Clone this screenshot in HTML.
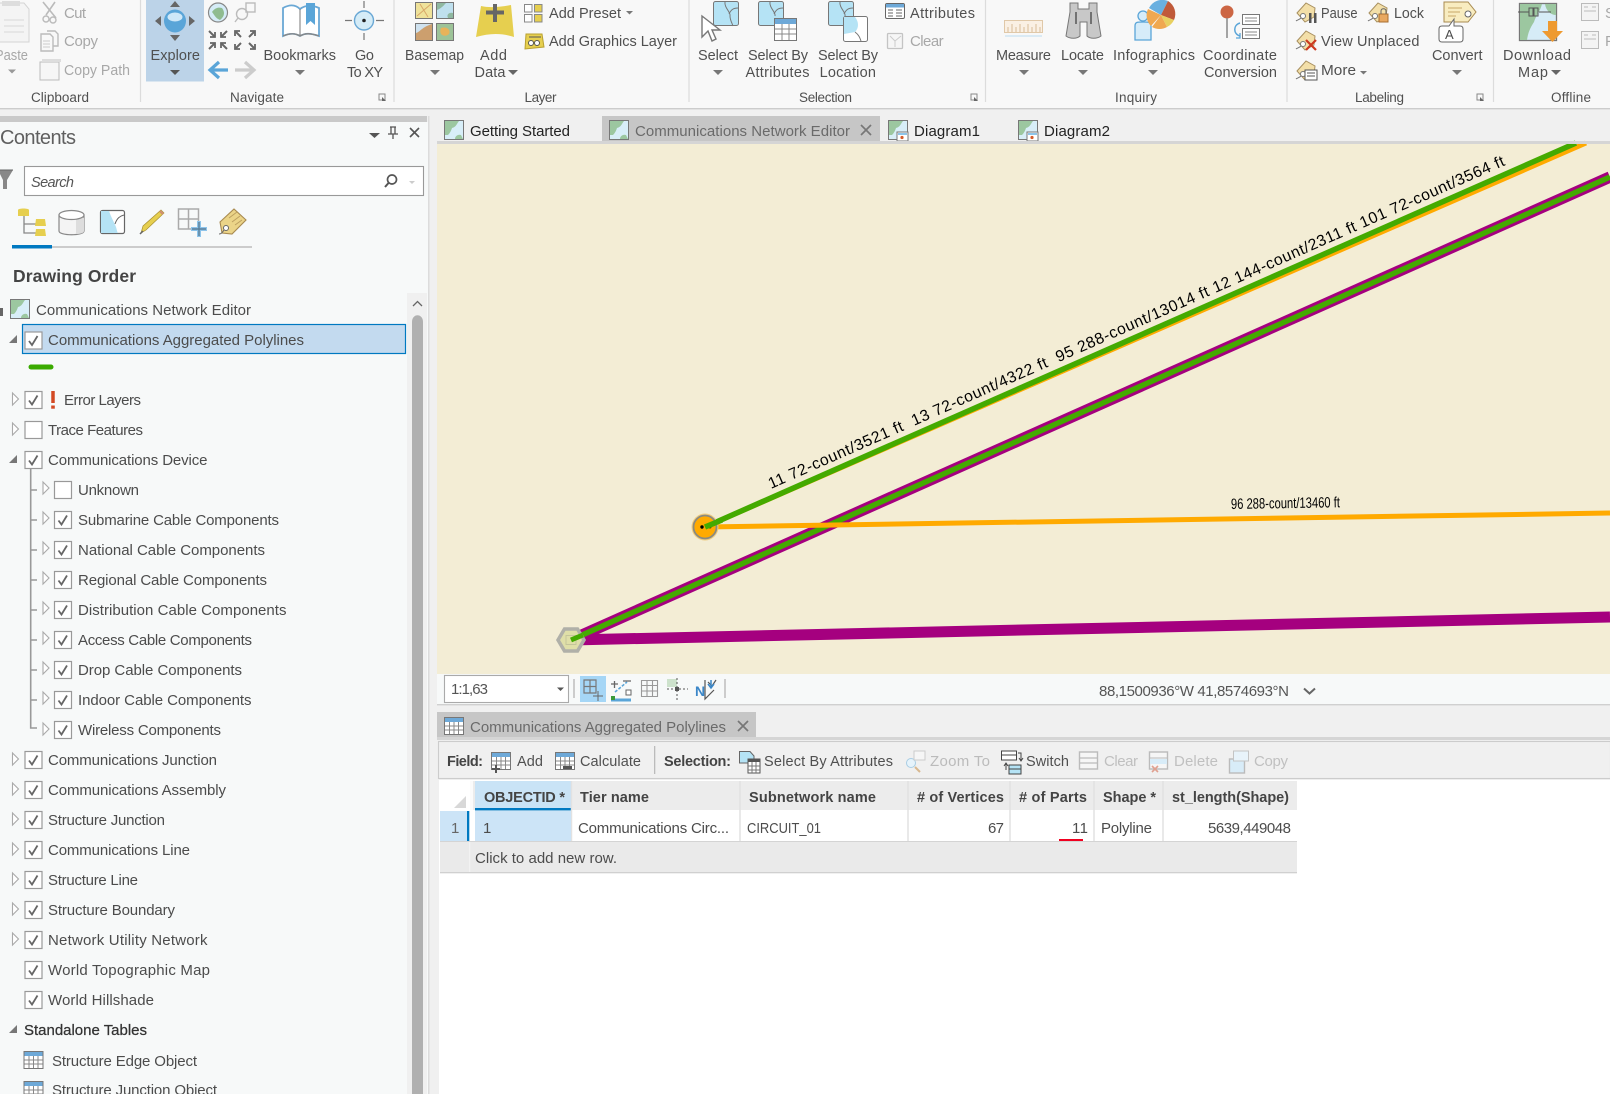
<!DOCTYPE html>
<html><head><meta charset="utf-8"><title>Communications Network Editor</title>
<style>
html,body{margin:0;padding:0;background:#f0f0f0;overflow:hidden;width:1610px;height:1094px}
svg{display:block}
text{font-family:"Liberation Sans",sans-serif;font-size:15px;fill:#4c4c4c}
.g{fill:#a8a8a8}
.r{font-size:14.5px;fill:#505050}
.n{font-size:13.5px;fill:#505050}
.b{font-weight:bold;font-size:14.5px;fill:#444}
.k{fill:#000;font-size:15.8px}
.s{fill:none;stroke:#777;stroke-width:1.4}
.l{fill:none;stroke:#bbb;stroke-width:1.4}
</style></head><body>
<svg width="1610" height="1094" viewBox="0 0 1610 1094" xmlns="http://www.w3.org/2000/svg">
<defs>
<g id="cb"><rect x=".5" y=".5" width="17" height="17" fill="#fff" stroke="#999" stroke-width="1.2"/></g>
<g id="ck"><use href="#cb"/><path d="M4.5 9.5L7.5 13.5L13 4.5" fill="none" stroke="#666" stroke-width="1.8"/></g>
<path id="to" d="M0-6L6 0L0 6Z" fill="#fff" stroke="#aaa" stroke-width="1.1"/>
<path id="tc" d="M8-5V3H0Z" fill="#777"/>
<g id="map"><rect x=".5" y=".5" width="19" height="19" fill="#d8eef8" stroke="#777"/><path d="M1 1H15C12 5 12 7 8 8C7 11 6 13 4 15H1Z" fill="#9cc7a0"/><path d="M11 19C11 16 14 14 17 15L19 19Z" fill="#9cc7a0"/></g>
<g id="dia"><use href="#map"/><rect x="9" y="12" width="11" height="9" fill="#fff" stroke="#777"/><rect x="10" y="13" width="9" height="2" fill="#8ec4e8"/><circle cx="14" cy="17.5" r="1.6" fill="#d45a2a"/></g>
<g id="tb"><rect x=".5" y=".5" width="19" height="17" fill="#fff" stroke="#777"/><rect x="1" y="1" width="18" height="4" fill="#6ea9d8"/><path d="M1 9H19M1 13H19M5.5 5V17M10 5V17M14.500 5V17" stroke="#888" fill="none"/></g>
<g id="tag"><path d="M1 11L10 1L19 6L18 15L9 20Z" fill="#f3dfa8" stroke="#a89060"/><circle cx="7" cy="14" r="2.500" fill="#fff" stroke="#777"/><path d="M5 16C3 18 1 18 0 19" stroke="#777" fill="none"/></g>
<g id="gt"><rect x=".5" y=".5" width="17" height="17" fill="#f4f4f4" stroke="#bbb"/><path d="M3 4H7M11 4H15M3 8H15" stroke="#bbb"/></g>
</defs>

<!-- background -->
<rect width="1610" height="1094" fill="#f0f0f0"/>
<!-- ribbon -->
<rect width="1610" height="108" fill="#f8f8f8"/>
<rect y="108" width="1610" height="1.400" fill="#ccc"/>
<path d="M140.500 0V102M394 0V102M689 0V102M985.500 0V102M1287 0V102M1493.500 0V102" stroke="#dcdcdc" stroke-width="1.200"/>
<rect x="146" y="0" width="58" height="81.500" fill="#bcd3e8"/>

<!-- clipboard -->
<path d="M-2 3H24L29 9V42H-2Z" fill="#f4f4f4" stroke="#d4d4d4"/><path d="M4 20H24M4 26H24M4 32H24" stroke="#d8d8d8"/>
<rect x="2" y="1" width="18" height="5" fill="#ddd"/>
<path d="M43 2L56 18M55 2L46 15" stroke="#bbb" stroke-width="1.600" fill="none"/><circle cx="46" cy="19" r="3" class="l"/><circle cx="53" cy="20" r="3" class="l"/>
<path d="M41 34H50L53 37V51H41Z M47 31H55L58 34V46H53" class="l" fill="#f6f6f6"/><path d="M43 41H50M43 44H50M43 47H50" stroke="#ccc"/>
<rect x="40" y="62" width="19" height="18" fill="#f6f6f6" stroke="#bbb"/><rect x="42" y="59" width="19" height="3" fill="#ddd"/>
<text class="g" x="64" y="18" textLength="22">Cut</text>
<text class="g" x="64" y="46" textLength="34">Copy</text>
<text class="g" x="64" y="75" textLength="66" lengthAdjust="spacingAndGlyphs" style="font-size:14.500px">Copy Path</text>
<text class="g" x="-5" y="60" textLength="33" lengthAdjust="spacingAndGlyphs" style="font-size:14.500px">Paste</text>
<path d="M8 69.500H16L12 73.500Z" fill="#999"/>
<text x="31" y="102" textLength="58" class="n">Clipboard</text>

<!-- navigate -->
<path d="M175 1L180 7H170ZM175 41L170 35H180ZM155 21L161 16V26ZM195 21L189 16V26Z" fill="#666"/>
<ellipse cx="175" cy="21" rx="11" ry="11.500" fill="#5aa5d8"/><ellipse cx="175" cy="17" rx="7.500" ry="4.500" fill="#cfe8f8"/>
<text x="150.500" y="60" textLength="49.500" class="r">Explore</text>
<path d="M170 70H180L175 75Z" fill="#555"/>
<circle cx="218" cy="12.500" r="9.500" fill="#d5ecf7" stroke="#888" stroke-width="1.200"/><path d="M212 12C215 8 218 7 222 8C225 12 225 16 220 20C215 18 214 14 212 12Z" fill="#8fbc90"/>
<circle cx="242" cy="14" r="5.500" class="l"/><path d="M238 18L235 22" class="l"/><rect x="246" y="3" width="9" height="9" class="l"/>
<path d="M209 31L215 37M227 31L221 37M209 49L215 43M227 49L221 43" stroke="#666" stroke-width="2"/><path d="M215 32V37H210M221 32V37H226M215 48V43H210M221 48V43H226" stroke="#666" stroke-width="1.800" fill="none"/>
<path d="M241 37L236 32M249 37L254 32M241 43L236 48M249 43L254 48" stroke="#666" stroke-width="2"/><path d="M235 36V31H240M255 36V31H250M235 44V49H240M255 44V49H250" stroke="#666" stroke-width="1.800" fill="none"/>
<path d="M228 70H212M219 62L210 70L219 78" fill="none" stroke="#5aa5d8" stroke-width="3.200"/>
<path d="M235 70H252M245 62L254 70L245 78" fill="none" stroke="#ccc" stroke-width="3.200"/>
<path d="M283 36V8C292 3 297 6 300 9C304 6 310 4 319 8V36C310 33 305 33 300 36C295 33 290 33 283 36Z" fill="#fff" stroke="#6aa8d5" stroke-width="1.800"/><path d="M300 9V36" stroke="#777"/><path d="M283 36C290 33 295 33 300 36C305 33 310 33 319 36" fill="none" stroke="#888" stroke-width="1.400"/><path d="M306 3H315V25L310.500 21L306 25Z" fill="#5aa5d8"/>
<text x="263.500" y="60" textLength="72.500" class="r">Bookmarks</text><path d="M295 70H305L300 75Z" fill="#777"/>
<circle cx="364" cy="20.500" r="9.500" fill="#d5ecf7" stroke="#6aa8d5" stroke-width="1.400"/><circle cx="364" cy="20.500" r="1.800" fill="#222"/><path d="M364 1V8M364 33V40M345 20.500H352M376 20.500H384" stroke="#777" stroke-width="1.200"/>
<text x="355" y="60" textLength="19" class="r">Go</text><text x="347" y="77" textLength="36" class="r">To XY</text>
<text x="230" y="102" textLength="54" class="n">Navigate</text>
<rect x="379" y="94" width="6" height="6" fill="none" stroke="#888"/><path d="M382 97L386 101H382Z" fill="#666"/>

<!-- layer -->
<rect x="415.500" y="2.500" width="17" height="16" fill="#efe29a" stroke="#777"/><path d="M417 16L431 4M420 4L428 17" stroke="#d8a868"/>
<rect x="436.500" y="2.500" width="17" height="16" fill="#bfe0ee" stroke="#777"/><path d="M437 10C442 8 444 5 446 3H437ZM448 18C446 14 450 12 453 13V18Z" fill="#8fb8a0"/>
<rect x="415.500" y="23.500" width="17" height="17" fill="#cfe2ef" stroke="#777"/><path d="M416 40V33C420 32 422 27 432 24V40Z" fill="#cc9f6e"/>
<rect x="436.500" y="23.500" width="17" height="17" fill="#9dc398" stroke="#777"/><path d="M441 28C447 26 451 30 449 34C445 38 438 35 441 28Z" fill="#e8b35a"/>
<text x="405" y="60" textLength="59" class="r" lengthAdjust="spacingAndGlyphs">Basemap</text><path d="M430 70H440L435 75Z" fill="#777"/>
<path d="M481 6C490 8 500 7 511 5L514 37C502 33 490 33 476 37Z" fill="#e6cf4f"/><path d="M495 4V22M486 12.500H504" stroke="#666" stroke-width="4"/>
<text x="480" y="60" textLength="27" class="r">Add</text><text x="474.500" y="77" textLength="31" class="r">Data</text><path d="M508 70H518L513 75Z" fill="#666"/>
<rect x="524.500" y="4.500" width="7.500" height="7.500" fill="#fff" stroke="#888"/><rect x="534.500" y="4.500" width="7.500" height="7.500" fill="#e6cf4f" stroke="#888"/><rect x="524.500" y="14.500" width="7.500" height="7.500" fill="#fff" stroke="#888"/><rect x="534.500" y="14.500" width="7.500" height="7.500" fill="#e6cf4f" stroke="#888"/>
<path d="M526 34H542L544 47L525 49Z" fill="#e6cf4f" stroke="#b8a030"/><circle cx="531" cy="43" r="2.500" fill="#fff" stroke="#555"/><circle cx="537" cy="43" r="2.500" fill="#fff" stroke="#555"/><path d="M529 37H541" stroke="#555"/>
<text x="549" y="18" textLength="72" class="r">Add Preset</text><path d="M626 11H633L629.500 14.500Z" fill="#777"/>
<text x="549" y="46" textLength="128" class="r">Add Graphics Layer</text>
<text x="524.500" y="102" textLength="32" class="n">Layer</text>

<!-- selection -->
<rect x="713.500" y="1.500" width="25" height="24" rx="2" fill="#b5e3f5" stroke="#777"/><path d="M725 1.500C724 8 731 12 730 16C730 20 732 23 733 26M738 8C733 8 731 10 729 14" fill="none" stroke="#777"/>
<path d="M702 16V37L708 31L712 41L716 39L712 30L720 30Z" fill="#fff" stroke="#777" stroke-width="1.400"/>
<text x="698" y="60" textLength="40" class="r">Select</text><path d="M713 70H723L718 75Z" fill="#777"/>
<rect x="758.500" y="1.500" width="25" height="24" rx="2" fill="#b5e3f5" stroke="#777"/><path d="M770 1.500C769 8 776 12 775 16M783 8C778 8 776 10 774 14" fill="none" stroke="#777"/>
<rect x="774.500" y="18.500" width="22" height="22" fill="#fff" stroke="#777"/><rect x="775" y="19" width="21" height="5" fill="#6ea9d8"/><path d="M775 29H796M775 34H796M782 24V40M789 24V40" stroke="#888"/>
<text x="748" y="60" textLength="60" class="r">Select By</text><text x="745.500" y="77" textLength="64" class="r">Attributes</text>
<rect x="828.500" y="1.500" width="25" height="24" rx="2" fill="#b5e3f5" stroke="#777"/><path d="M840 1.500C839 8 846 12 845 16M853 8C848 8 846 10 844 14" fill="none" stroke="#777"/>
<rect x="843.500" y="16.500" width="24" height="25" rx="2" fill="#fff" stroke="#777"/><path d="M844 17H855C859 22 859 28 855 32L844 34Z" fill="#b5e3f5"/><path d="M855 32C859 35 860 38 861 41" stroke="#777" fill="none"/>
<text x="818" y="60" textLength="60" class="r">Select By</text><text x="819.600" y="77" textLength="56.400" class="r">Location</text>
<rect x="885.500" y="3.500" width="19" height="15" rx="1.500" fill="#fff" stroke="#666"/><rect x="886" y="4" width="18" height="3.500" fill="#6ea9d8"/><path d="M888 10H893M888 13H893M888 16H893M896 10H902M896 13H902M896 16H902" stroke="#666"/>
<text x="910" y="18" textLength="65" class="r">Attributes</text>
<rect x="887.500" y="33.500" width="15" height="15" rx="1" fill="#f6f6f6" stroke="#c4c4c4" stroke-width="1.300"/><path d="M890 36L895 41V47M901 36L895 41" stroke="#ccc" fill="none"/>
<text x="910" y="46" textLength="33.600" class="g">Clear</text>
<text x="799" y="102" textLength="53" class="n">Selection</text>
<rect x="971" y="94" width="6" height="6" fill="none" stroke="#888"/><path d="M974 97L978 101H974Z" fill="#666"/>

<!-- inquiry -->
<rect x="1004.500" y="20.500" width="38" height="12" fill="#faf0e4" stroke="#e0c8a8"/><path d="M1008 32V27M1012 32V24M1016 32V27M1020 32V24M1024 32V27M1028 32V24M1032 32V27M1036 32V24M1040 32V27" stroke="#d8bc98"/><path d="M1005 36H1042" stroke="#bcdcf0"/>
<text x="996" y="60" textLength="55" class="r">Measure</text><path d="M1019 70H1029L1024 75Z" fill="#777"/>
<path d="M1070 3H1078V9H1089V3H1097V12L1101 36C1097 39 1090 39 1087 36V22H1080V36C1077 39 1070 39 1066 36L1070 12Z" fill="#c8c8c8" stroke="#777"/><path d="M1076 12V24M1091 12V24" stroke="#555" stroke-width="1.500"/>
<text x="1061" y="60" textLength="43" class="r">Locate</text><path d="M1078 70H1088L1083 75Z" fill="#777"/>
<circle cx="1143" cy="16" r="5" fill="#d6ecf9" stroke="#5aa5d8" stroke-width="1.300"/><path d="M1135 40V26C1135 22 1137 22 1143 22C1149 22 1151 22 1151 26V40Z" fill="#d6ecf9" stroke="#5aa5d8" stroke-width="1.300"/>
<path d="M1161 15L1148 9A15 15 0 0 0 1151 26Z" fill="#f0a850"/><path d="M1161 15L1149 8A15 15 0 0 1 1168 1Z" fill="#6ab0e0"/><path d="M1161 15L1168 1A15 15 0 0 1 1174 20Z" fill="#c05a3a"/><path d="M1161 15L1174 20A15 15 0 0 1 1167 27Z" fill="#e8d060"/><path d="M1161 15L1167 27A15 15 0 0 1 1152 27Z" fill="#f0a850"/>
<text x="1113" y="60" textLength="82" class="r">Infographics</text><path d="M1148 70H1158L1153 75Z" fill="#777"/>
<circle cx="1227" cy="12" r="6.500" fill="#cc6644"/><path d="M1227 18V38" stroke="#888" stroke-width="1.500"/>
<rect x="1242.500" y="14.500" width="17" height="10" fill="#fff" stroke="#777"/><rect x="1242.500" y="28.500" width="17" height="10" fill="#fff" stroke="#777"/><path d="M1245 18H1257M1245 21H1257M1245 32H1257M1245 35H1257" stroke="#888"/>
<path d="M1240 23C1233 25 1233 34 1240 36" fill="none" stroke="#5aa5d8" stroke-width="1.500"/><path d="M1240 33V38H1236" fill="none" stroke="#5aa5d8" stroke-width="1.300"/>
<text x="1203" y="60" textLength="74" class="r">Coordinate</text><text x="1204" y="77" textLength="73" class="r">Conversion</text>
<text x="1115" y="102" textLength="42" class="n">Inquiry</text>

<!-- labeling -->
<use href="#tag" x="1296" y="2"/><rect x="1309" y="13" width="2.500" height="10" fill="#555"/><rect x="1314" y="13" width="2.500" height="10" fill="#555"/>
<text x="1321" y="18" textLength="36.500" class="r" lengthAdjust="spacingAndGlyphs">Pause</text>
<use href="#tag" x="1368" y="2"/><rect x="1379" y="14" width="9" height="8" fill="#e8a860" stroke="#a86e30"/><path d="M1381 14V11C1381 8 1386 8 1386 11V14" fill="none" stroke="#666"/>
<text x="1394" y="18" textLength="30" class="r" lengthAdjust="spacingAndGlyphs">Lock</text>
<use href="#tag" x="1296" y="30"/><path d="M1306 40L1316 50M1316 40L1306 50" stroke="#cc3a20" stroke-width="2.200"/>
<text x="1321" y="46" textLength="98.500" class="r">View Unplaced</text>
<use href="#tag" x="1296" y="60"/><rect x="1305" y="70" width="12" height="10" fill="#fff" stroke="#555"/><path d="M1307 73H1315M1307 76H1315" stroke="#555"/>
<text x="1321" y="75" textLength="35" class="r" lengthAdjust="spacingAndGlyphs">More</text><path d="M1360 71H1367L1363.500 74.500Z" fill="#777"/>
<path d="M1444 2H1468L1476 12L1468 22H1444Z" fill="#f8ecc0" stroke="#a88a50"/><path d="M1448 8H1462M1448 12H1460M1448 16H1456" stroke="#c8a868"/><circle cx="1468" cy="14" r="3" fill="#fff" stroke="#666"/>
<path d="M1442 26H1449L1454 19V26H1460C1462 26 1463 27 1463 29V39C1463 41 1462 42 1460 42H1442C1440 42 1439 41 1439 39V29C1439 27 1440 26 1442 26Z" fill="#fff" stroke="#666"/>
<text x="1445" y="39" style="font-size:13px" fill="#555">A</text>
<text x="1432" y="60" textLength="50.500" class="r">Convert</text><path d="M1452 70H1462L1457 75Z" fill="#777"/>
<text x="1355" y="102" textLength="49" class="n">Labeling</text>
<rect x="1477" y="94" width="6" height="6" fill="none" stroke="#888"/><path d="M1480 97L1484 101H1480Z" fill="#666"/>

<!-- offline -->
<rect x="1519.500" y="3.500" width="37" height="37" fill="#d6ecf7" stroke="#777" stroke-width="1.300"/><path d="M1520 4H1542C1540 12 1536 15 1534 22C1530 28 1528 33 1527 40H1520Z" fill="#9cc7a0"/><path d="M1545 4H1556V15C1551 15 1546 11 1545 4Z" fill="#9cc7a0"/>
<path d="M1518 12H1529M1539 12H1551" stroke="#555"/><rect x="1529" y="8" width="4" height="8" fill="none" stroke="#555"/><rect x="1534" y="8" width="4" height="8" fill="none" stroke="#555"/>
<path d="M1548 21H1557V31H1563L1552.500 42L1542 31H1548Z" fill="#ee9a30"/>
<text x="1503" y="60" textLength="68" class="r">Download</text><text x="1518" y="77" textLength="30" class="r">Map</text><path d="M1551 70H1561L1556 75Z" fill="#666"/>
<text x="1551" y="102" textLength="40" class="n">Offline</text>
<use href="#gt" x="1581" y="3"/><use href="#gt" x="1581" y="31"/>
<text x="1605" y="18" class="g">S</text><text x="1605" y="46" class="g">F</text>

<!-- Contents pane -->
<rect x="0" y="116" width="427" height="6" fill="#c9c9c9"/>
<rect x="0" y="122" width="428" height="972" fill="#f7f9f9"/>
<rect x="428" y="116" width="1.500" height="978" fill="#dcdcdc"/>
<text x="0" y="144" textLength="76" style="font-size:20px;fill:#606060">Contents</text>
<path d="M369 133H380L374.500 138Z" fill="#555"/>
<path d="M390 127H396M391 127V134H395V127M388 134H398M393 134V139" stroke="#555" fill="none" stroke-width="1.300"/>
<path d="M410 128L419 137M419 128L410 137" stroke="#555" stroke-width="1.600"/>
<path d="M-2 170H13L7 180V189H3V180Z" fill="#888"/><path d="M-2 170H13" stroke="#666"/>
<rect x="24.500" y="166.500" width="399" height="29" fill="#fff" stroke="#999" stroke-width="1.100"/>
<text x="31" y="187" textLength="43" style="font-style:italic;font-size:14.500px;fill:#555">Search</text>
<circle cx="392" cy="179.500" r="4.500" fill="none" stroke="#555" stroke-width="1.700"/><path d="M388.500 183L385 187" stroke="#555" stroke-width="2"/>
<path d="M409 181H415L412 184Z" fill="#ccc"/>

<!-- contents icon row -->
<path d="M18 210C18 208 29 208 29 210V216H18Z" fill="#e6cf4f"/><path d="M24 216V233H36M24 224H36" stroke="#888" stroke-width="1.300" fill="none"/><path d="M36 219H45L46 226H35Z M36 229H45L46 236H35Z" fill="#e6cf4f"/>
<path d="M59 215V231C59 236 84 236 84 231V215Z" fill="#f4f4f4" stroke="#888" stroke-width="1.200"/><path d="M76 218H84V231C84 233 80 234 76 234Z" fill="#ddd"/><ellipse cx="71.500" cy="215" rx="12.500" ry="4.500" fill="#fff" stroke="#888" stroke-width="1.200"/>
<rect x="100.500" y="210.500" width="24" height="23" rx="2" fill="#fff" stroke="#666" stroke-width="1.200"/><path d="M101 211H109C111 217 114 222 116 227C117 230 117 232 118 233H101Z" fill="#b5e3f5"/><path d="M124 215C120 216 117 218 115 224" fill="none" stroke="#666"/>
<path d="M141 233L143 226L161 210L164 213L146 230Z" fill="#e6cf4f" stroke="#a89030" stroke-width=".7"/><path d="M160 211L163 214" stroke="#d09070" stroke-width="2.500"/><path d="M140 234L143 231" stroke="#666" stroke-width="1.500"/>
<path d="M178.500 209H198.500V229H178.500ZM178.500 219H198.500M188.500 209V229" fill="none" stroke="#aaa" stroke-width="1.500"/>
<path d="M199 221V237M191 229H207" stroke="#8ec4ea" stroke-width="4"/><path d="M199 222V236M192 229H206" stroke="#5a7f99" stroke-width="1.400"/>
<path d="M220 222L234 209L246 220L232 234L222 233Z" fill="#ebd488" stroke="#a88a50" stroke-width="1.100"/><path d="M229 218L237 212M232 222L240 216M235 225L242 220" stroke="#bda060"/><circle cx="226" cy="228" r="2.500" fill="#fff" stroke="#666"/><path d="M224 230C222 233 221 234 219 234" stroke="#666" fill="none"/>
<rect x="52" y="246" width="200" height="2" fill="#ccc"/><rect x="12" y="245" width="40" height="3.500" fill="#0079c1"/>
<text x="13" y="282" textLength="123" style="font-weight:bold;font-size:17.500px;fill:#444">Drawing Order</text>

<!-- scrollbar -->
<rect x="407" y="293" width="20" height="801" fill="#f0f0f0"/>
<path d="M413 306L417.500 301.500L422 306" fill="none" stroke="#666" stroke-width="1.300"/>
<path d="M412 1094V322C412 313 423 313 423 322V1094Z" fill="#b0b0b0"/>

<!-- tree -->
<path d="M-3 308V316H3V308Z" fill="#666"/>
<use href="#map" x="10" y="299"/>
<text x="36" y="315" textLength="215">Communications Network Editor</text>
<rect x="22.500" y="324.500" width="383" height="29" fill="#c3daef" stroke="#0079c1" stroke-width="1.200"/>
<use href="#tc" x="9" y="340"/><use href="#ck" x="24.500" y="331.500"/>
<text x="48" y="345" textLength="256">Communications Aggregated Polylines</text>
<path d="M31 367H51" stroke="#3aaa00" stroke-width="5" stroke-linecap="round"/>

<use href="#to" x="12.500" y="399"/><use href="#ck" x="24.500" y="391"/>
<path d="M53 391V403" stroke="#d34a24" stroke-width="3.500"/><rect x="51.200" y="405.500" width="3.600" height="3.200" fill="#d34a24"/>
<text x="64" y="405" textLength="77">Error Layers</text>
<use href="#to" x="12.500" y="429"/><use href="#cb" x="24.500" y="421"/><text x="48" y="435" textLength="95">Trace Features</text>
<use href="#tc" x="9" y="460"/><use href="#ck" x="24.500" y="451"/><text x="48" y="465" textLength="159.500">Communications Device</text>

<path d="M30.700 469V728H37M31 490H37M31 520H37M31 550H37M31 580H37M31 610H37M31 640H37M31 670H37M31 700H37" fill="none" stroke="#999" stroke-width="1.600"/>
<use href="#to" x="43" y="488"/><use href="#cb" x="54" y="481"/><text x="78" y="495" textLength="61">Unknown</text>
<use href="#to" x="43" y="518"/><use href="#ck" x="54" y="511"/><text x="78" y="525" textLength="201">Submarine Cable Components</text>
<use href="#to" x="43" y="548"/><use href="#ck" x="54" y="541"/><text x="78" y="555" textLength="187">National Cable Components</text>
<use href="#to" x="43" y="578"/><use href="#ck" x="54" y="571"/><text x="78" y="585" textLength="189">Regional Cable Components</text>
<use href="#to" x="43" y="608"/><use href="#ck" x="54" y="601"/><text x="78" y="615" textLength="208.500">Distribution Cable Components</text>
<use href="#to" x="43" y="638"/><use href="#ck" x="54" y="631"/><text x="78" y="645" textLength="174">Access Cable Components</text>
<use href="#to" x="43" y="668"/><use href="#ck" x="54" y="661"/><text x="78" y="675" textLength="164">Drop Cable Components</text>
<use href="#to" x="43" y="698"/><use href="#ck" x="54" y="691"/><text x="78" y="705" textLength="173.500">Indoor Cable Components</text>
<use href="#to" x="43" y="729"/><use href="#ck" x="54" y="721"/><text x="78" y="735" textLength="143">Wireless Components</text>

<use href="#to" x="12.500" y="759"/><use href="#ck" x="24.500" y="751"/><text x="48" y="765" textLength="169">Communications Junction</text>
<use href="#to" x="12.500" y="789"/><use href="#ck" x="24.500" y="781"/><text x="48" y="795" textLength="178">Communications Assembly</text>
<use href="#to" x="12.500" y="819"/><use href="#ck" x="24.500" y="811"/><text x="48" y="825" textLength="117">Structure Junction</text>
<use href="#to" x="12.500" y="849"/><use href="#ck" x="24.500" y="841"/><text x="48" y="855" textLength="142">Communications Line</text>
<use href="#to" x="12.500" y="879"/><use href="#ck" x="24.500" y="871"/><text x="48" y="885" textLength="90">Structure Line</text>
<use href="#to" x="12.500" y="909"/><use href="#ck" x="24.500" y="901"/><text x="48" y="915" textLength="127">Structure Boundary</text>
<use href="#to" x="12.500" y="939"/><use href="#ck" x="24.500" y="931"/><text x="48" y="945" textLength="159.500">Network Utility Network</text>
<use href="#ck" x="24.500" y="961"/><text x="48" y="975" textLength="162">World Topographic Map</text>
<use href="#ck" x="24.500" y="991"/><text x="48" y="1005" textLength="106">World Hillshade</text>
<use href="#tc" x="9" y="1030"/><text x="24" y="1035" textLength="123" style="fill:#333;stroke:#333;stroke-width:.25">Standalone Tables</text>
<use href="#tb" x="23.500" y="1051"/><text x="52" y="1066" textLength="145">Structure Edge Object</text>
<use href="#tb" x="23.500" y="1081"/><text x="52" y="1095" textLength="165">Structure Junction Object</text>

<!-- view tabs -->
<rect x="602" y="116" width="278" height="25" fill="#c6c6c6"/>
<use href="#map" x="444" y="120"/><text x="470" y="136" textLength="100" style="fill:#222">Getting Started</text>
<use href="#map" x="609" y="120"/><text x="635" y="136" textLength="215" style="fill:#6a6a6a">Communications Network Editor</text>
<path d="M861 125L871 135M871 125L861 135" stroke="#777" stroke-width="1.700"/>
<use href="#dia" x="888" y="120"/><text x="914" y="136" textLength="66" style="fill:#222">Diagram1</text>
<use href="#dia" x="1018" y="120"/><text x="1044" y="136" textLength="66" style="fill:#222">Diagram2</text>

<!-- map -->
<rect x="437" y="144" width="1173" height="530" fill="#f3edd5"/>
<path d="M571 640L1610 617" stroke="#a5007f" stroke-width="11"/>
<path d="M571 640L1610 177" stroke="#a5007f" stroke-width="11.500"/>
<path d="M571 640L1610 177" stroke="#44aa00" stroke-width="5.500"/>
<path d="M705 527L1610 513" stroke="#ffaa00" stroke-width="5"/>
<path d="M705 527L1586 143" stroke="#ffaa00" stroke-width="5"/>
<path d="M705 527L1576 143" stroke="#44aa00" stroke-width="5.500"/>
<rect x="437" y="141" width="1173" height="3" fill="#d5d5d5"/>
<path d="M558 640L564.500 629H577.500L584 640L577.500 651H564.500Z" fill="#dfdfa8" stroke="#b0b0a8" stroke-width="3.500"/>
<rect x="566" y="635.500" width="10" height="9" fill="none" stroke="#c4c49a"/>
<path d="M571 640L583 635" stroke="#44aa00" stroke-width="5"/>
<circle cx="705" cy="527" r="13.500" fill="#eecb80"/><circle cx="705" cy="527" r="11.500" fill="#ffaa00" stroke="#8a8a80" stroke-width="1.800"/>
<circle cx="702" cy="527" r="1.700" fill="#000"/><circle cx="710" cy="527" r="1.500" fill="#553300"/>
<path d="M705 527L722 520" stroke="#44aa00" stroke-width="5.500"/>
<text class="k" x="771" y="489" textLength="803" transform="rotate(-23.800 771 489)" xml:space="preserve">11 72-count/3521 ft  13 72-count/4322 ft  95 288-count/13014 ft 12 144-count/2311 ft 101 72-count/3564 ft</text>
<text x="1231" y="509" textLength="109" lengthAdjust="spacingAndGlyphs" transform="rotate(-.9 1231 509)" style="font-size:15px;fill:#000">96 288-count/13460 ft</text>

<!-- map status bar -->
<rect x="437" y="674" width="1173" height="30" fill="#f7f9f9"/>
<rect x="437" y="704" width="1173" height="1.400" fill="#d0d0d0"/>
<rect x="444.500" y="675.500" width="124" height="27" fill="#fff" stroke="#aaa" stroke-width="1.100"/>
<text x="451" y="694" textLength="37" style="fill:#555">1:1,63</text><path d="M557 687.500H564L560.500 691Z" fill="#555"/>
<rect x="573" y="679" width="2" height="19" fill="#ccc"/>
<rect x="580" y="676" width="26" height="26" fill="#a5d6f6"/>
<path d="M584 680H596V693H584ZM584 686.500H596M590 680V693" fill="none" stroke="#777" stroke-width="1.200"/><path d="M598 691V701M593 696H603" stroke="#666"/>
<path d="M611 700H631" stroke="#5aa5d8" stroke-width="3"/><path d="M615 692L627 682" stroke="#5aa5d8" stroke-width="1.600" stroke-dasharray="3 1.500"/><rect x="611" y="696" width="4" height="4" fill="#3a9a3a"/><path d="M611 684H618M614.500 681V688M623 681H631" stroke="#666" stroke-width="1.300"/><rect x="626" y="690" width="5" height="5" fill="#fff" stroke="#666"/>
<path d="M641.500 680.500H657.500V696.500H641.500ZM641.500 685.500H657.500M641.500 691H657.500M647 680.500V696.500M652.500 680.500V696.500" fill="none" stroke="#999" stroke-width="1.100"/>
<rect x="667" y="679" width="10" height="8" fill="#cde2cc"/><path d="M677 678V702" stroke="#555" stroke-dasharray="2 2"/><path d="M667 689H688" stroke="#555" stroke-dasharray="2 2"/><rect x="675" y="687" width="4" height="4" fill="#555"/>
<text x="695" y="696" style="font-weight:bold;font-size:14px;fill:#3b87c8">N</text><path d="M705 680V699L714 690M708 682L712 686M716 680L712 686" fill="none" stroke="#555" stroke-width="1.200"/><path d="M711 680V687M708 684L711 688L714 684" stroke="#3b87c8" fill="none" stroke-width="1.500"/>
<rect x="724" y="679" width="2" height="19" fill="#ccc"/>
<text x="1099" y="696" textLength="190" style="fill:#555">88,1500936°W 41,8574693°N</text>
<path d="M1304 688.500L1309.500 693.500L1315 688.500" fill="none" stroke="#666" stroke-width="2"/>

<!-- table view -->
<rect x="437" y="712" width="319" height="26" fill="#c6c6c6"/>
<rect x="437" y="737" width="1173" height="3" fill="#d5d5d5"/>
<use href="#tb" x="444" y="717"/>
<text x="470" y="732" textLength="256" style="fill:#6a6a6a">Communications Aggregated Polylines</text>
<path d="M738 721L748 731M748 721L738 731" stroke="#777" stroke-width="1.700"/>
<rect x="438.500" y="741.500" width="1172" height="37" fill="#f0f0f0" stroke="#ccc" stroke-width="1.100"/>
<rect x="439" y="780" width="1171" height="314" fill="#fff"/>
<text class="b" x="447" y="766" textLength="36">Field:</text>
<use href="#tb" x="491" y="752"/><path d="M496 765V773M492 769H500" stroke="#555" stroke-width="2"/>
<text x="517" y="766" textLength="26" class="r">Add</text>
<use href="#tb" x="555" y="752"/><rect x="563" y="766" width="9" height="3" fill="#555"/>
<text x="580" y="766" textLength="61" class="r">Calculate</text>
<rect x="654" y="746" width="1.300" height="28" fill="#bbb"/>
<text class="b" x="664" y="766" textLength="67">Selection:</text>
<path d="M739.500 751.500H750L754 756V763H739.500Z" fill="#b5e3f5" stroke="#666"/><rect x="748" y="759" width="12" height="14" fill="#fff" stroke="#555"/><rect x="748" y="759" width="12" height="3" fill="#555"/><path d="M748 766H760M748 770H760M752 762V773M756 762V773" stroke="#777"/>
<text x="764" y="766" textLength="129" class="r">Select By Attributes</text>
<circle cx="911" cy="763" r="4.500" fill="#e6f3fb" stroke="#a8cde4"/><path d="M915 767L920 772" stroke="#d8b890" stroke-width="2"/><rect x="914" y="751" width="11" height="9" fill="#f6f6f6" stroke="#ccc"/>
<text x="930" y="766" textLength="60" style="fill:#bbb">Zoom To</text>
<rect x="1001.500" y="751" width="15" height="9" fill="#fff" stroke="#444"/><rect x="1009" y="765" width="12" height="9" fill="#b5e3f5" stroke="#444"/><path d="M1002 755H1016M1009 769H1021" stroke="#444"/><path d="M1018 753H1021V760M1019 758L1021 761L1023 758M1006 763V770M1004 766L1006 763L1008 766" fill="none" stroke="#444"/>
<text x="1026" y="766" textLength="43" class="r">Switch</text>
<rect x="1079.500" y="752" width="18" height="17" fill="#f6f6f6" stroke="#bbb" stroke-width="1.400"/><path d="M1080 758H1097M1080 763H1097" stroke="#bbb" stroke-width="1.200"/>
<text x="1104" y="766" textLength="34" style="fill:#c0c0c0">Clear</text>
<rect x="1149.500" y="752" width="18" height="17" fill="#f6f6f6" stroke="#bbb" stroke-width="1.400"/><path d="M1150 758H1167" stroke="#bbb"/><rect x="1150" y="759" width="17" height="5" fill="#d8ecf8"/><path d="M1152 766L1158 772M1158 766L1152 772" stroke="#e0a090" stroke-width="1.600"/>
<text x="1174" y="766" textLength="44" style="fill:#c0c0c0">Delete</text>
<rect x="1229.500" y="759" width="15" height="14" fill="#d8ecf8" stroke="#bbb" stroke-width="1.400"/><rect x="1233.500" y="751" width="15" height="10" fill="#e8f3fa" stroke="#c4c4c4"/>
<text x="1254" y="766" textLength="34" style="fill:#c0c0c0">Copy</text>

<!-- grid header -->
<path d="M454 808H466V796Z" fill="#d8d8d8"/>
<rect x="470" y="781" width="827" height="29" fill="#ececec"/>
<rect x="470" y="781" width="3" height="29" fill="#fff" opacity=".8"/>
<rect x="475" y="781" width="96" height="27" fill="#c9e3f6"/><rect x="475" y="808" width="96" height="2.500" fill="#0079c1"/>
<rect x="440" y="811" width="857" height="30" fill="#fff"/>
<path d="M571.500 781V842M740 781V842M908 781V842M1010 781V842M1094 781V842M1163 781V842" stroke="#e2e2e2" stroke-width="1.500"/>
<text class="b" x="484" y="802" textLength="81">OBJECTID *</text>
<text class="b" x="580" y="802" textLength="69">Tier name</text>
<text class="b" x="749" y="802" textLength="127">Subnetwork name</text>
<text class="b" x="917" y="802" textLength="87">&#35; of Vertices</text>
<text class="b" x="1019" y="802" textLength="68">&#35; of Parts</text>
<text class="b" x="1103" y="802" textLength="53">Shape *</text>
<text class="b" x="1172" y="802" textLength="117">st_length(Shape)</text>
<rect x="440" y="811" width="27" height="30" fill="#cce4f7"/><rect x="467" y="811" width="2.300" height="30" fill="#0079c1"/>
<rect x="475" y="811" width="96" height="30" fill="#cce4f7"/>
<text x="451" y="833" style="fill:#666">1</text>
<text x="483" y="833">1</text>
<text x="578" y="833" textLength="151">Communications Circ...</text>
<text x="747" y="833" textLength="74" lengthAdjust="spacingAndGlyphs">CIRCUIT_01</text>
<text x="988" y="833" textLength="16">67</text>
<text x="1072" y="833" textLength="16">11</text>
<rect x="1059" y="839" width="24" height="2" fill="#f00020"/>
<text x="1101" y="833" textLength="51">Polyline</text>
<text x="1208" y="833" textLength="83">5639,449048</text>
<rect x="440" y="841" width="857" height="1.400" fill="#d4d4d4"/>
<rect x="440" y="842" width="857" height="30" fill="#eaeaea"/>
<rect x="469" y="842" width="1.300" height="30" fill="#f2f2f2"/>
<rect x="440" y="872" width="857" height="1.300" fill="#d0d0d0"/>
<text x="475" y="863" textLength="142">Click to add new row.</text>
</svg>
</body></html>
